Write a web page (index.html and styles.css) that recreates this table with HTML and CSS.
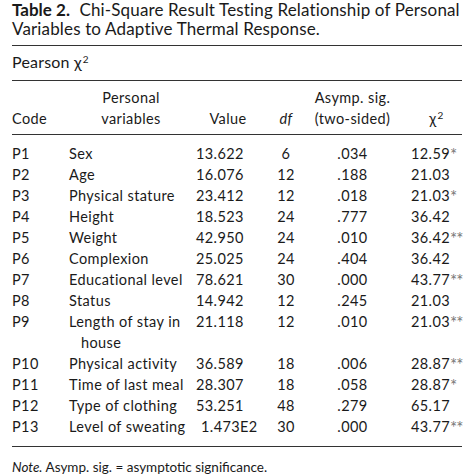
FILE: index.html
```
<!DOCTYPE html>
<html>
<head>
<meta charset="utf-8">
<link rel="stylesheet" href="styles.css">
</head>
<body>
<div class="page">
  <div class="title"><b class="label">Table 2.</b> Chi-Square Result Testing Relationship of Personal Variables to Adaptive Thermal Response.</div>
  <div class="pearson">Pearson χ<sup>2</sup></div>
  <table class="tbl">
    <colgroup>
      <col class="c-code"><col class="c-var"><col class="c-val"><col class="c-df"><col class="c-sig"><col class="c-chi">
    </colgroup>
    <thead>
      <tr>
        <th class="code">Code</th>
        <th class="var">Personal<br>variables</th>
        <th class="val">Value</th>
        <th class="df"><i>df</i></th>
        <th class="sig">Asymp. sig.<br>(two-sided)</th>
        <th class="chi">χ<sup>2</sup></th>
      </tr>
    </thead>
    <tbody>
      <tr><td>P1</td><td>Sex</td><td class="v">13.622</td><td class="d">6</td><td class="s">.034</td><td class="x">12.59<span class="ast">*</span></td></tr>
      <tr><td>P2</td><td>Age</td><td class="v">16.076</td><td class="d">12</td><td class="s">.188</td><td class="x">21.03</td></tr>
      <tr><td>P3</td><td>Physical stature</td><td class="v">23.412</td><td class="d">12</td><td class="s">.018</td><td class="x">21.03<span class="ast">*</span></td></tr>
      <tr><td>P4</td><td>Height</td><td class="v">18.523</td><td class="d">24</td><td class="s">.777</td><td class="x">36.42</td></tr>
      <tr><td>P5</td><td>Weight</td><td class="v">42.950</td><td class="d">24</td><td class="s">.010</td><td class="x">36.42<span class="ast">**</span></td></tr>
      <tr><td>P6</td><td>Complexion</td><td class="v">25.025</td><td class="d">24</td><td class="s">.404</td><td class="x">36.42</td></tr>
      <tr><td>P7</td><td>Educational level</td><td class="v">78.621</td><td class="d">30</td><td class="s">.000</td><td class="x">43.77<span class="ast">**</span></td></tr>
      <tr><td>P8</td><td>Status</td><td class="v">14.942</td><td class="d">12</td><td class="s">.245</td><td class="x">21.03</td></tr>
      <tr><td>P9</td><td>Length of stay in<br><span class="ind">house</span></td><td class="v">21.118</td><td class="d">12</td><td class="s">.010</td><td class="x">21.03<span class="ast">**</span></td></tr>
      <tr><td>P10</td><td>Physical activity</td><td class="v">36.589</td><td class="d">18</td><td class="s">.006</td><td class="x">28.87<span class="ast">**</span></td></tr>
      <tr><td>P11</td><td>Time of last meal</td><td class="v">28.307</td><td class="d">18</td><td class="s">.058</td><td class="x">28.87<span class="ast">*</span></td></tr>
      <tr><td>P12</td><td>Type of clothing</td><td class="v">53.251</td><td class="d">48</td><td class="s">.279</td><td class="x">65.17</td></tr>
      <tr><td>P13</td><td>Level of sweating</td><td class="v e">1.473E2</td><td class="d">30</td><td class="s">.000</td><td class="x">43.77<span class="ast">**</span></td></tr>
    </tbody>
  </table>
  <div class="note"><i>Note.</i> Asymp. sig. = asymptotic significance.</div>
</div>
</body>
</html>
```
FILE: styles.css
```
html, body {
  margin: 0;
  padding: 0;
  background: #fff;
}
.page {
  width: 450px;
  padding: 0 12px;
  font-family: Lato, "Open Sans", sans-serif;
  color: #1a1a1a;
}
.title {
  font-size: 17px;
  line-height: 19px;
  letter-spacing: 0.15px;
  padding-top: 0;
  padding-bottom: 7px;
  border-bottom: 1px solid #333;
}
.title .label {
  font-weight: 700;
  letter-spacing: 0;
  margin-right: 5px;
}
.pearson {
  font-size: 16px;
  line-height: 20px;
  letter-spacing: 0.2px;
  padding: 6px 0 8px;
  border-bottom: 1px solid #333;
}
sup {
  font-size: 10px;
  vertical-align: 0.5em;
  line-height: 0;
  margin-left: 1px;
}
.tbl {
  width: 450px;
  border-collapse: collapse;
  font-size: 14.5px;
  letter-spacing: 0.4px;
  table-layout: fixed;
  border-bottom: 1px solid #333;
}
.c-code { width: 57px; }
.c-var { width: 124px; }
.c-val { width: 70px; }
.c-df { width: 46px; }
.c-sig { width: 87px; }
.c-chi { width: 66px; }
.tbl th {
  font-weight: 400;
  vertical-align: bottom;
  line-height: 21px;
  padding: 6px 0 5px;
  border-bottom: 1px solid #333;
  white-space: nowrap;
}
.tbl th.code { text-align: left; }
.tbl th.var { text-align: center; }
.tbl th.val { text-align: center; }
.tbl th.df { text-align: center; }
.tbl th.sig { text-align: center; }
.tbl th.chi { text-align: center; padding-left: 15px; }
.tbl td {
  padding: 0;
  line-height: 21px;
  vertical-align: top;
  white-space: nowrap;
}
.tbl tbody tr:first-child td { padding-top: 8px; }
.tbl tbody tr:last-child td { padding-bottom: 9px; }
.ind { padding-left: 12px; }
.tbl td.v { padding-left: 3px; }
.tbl td.v.e { padding-left: 8px; }
.d { text-align: center; }
.s { text-align: center; }
.tbl td.x { text-align: left; padding-left: 15px; }
.ast {
  font-size: 17px;
  line-height: 0;
  color: #777;
  letter-spacing: -1px;
  position: relative;
  top: 2px;
}
.note {
  font-size: 13.5px;
  line-height: 20px;
  padding-top: 10px;
}
```
